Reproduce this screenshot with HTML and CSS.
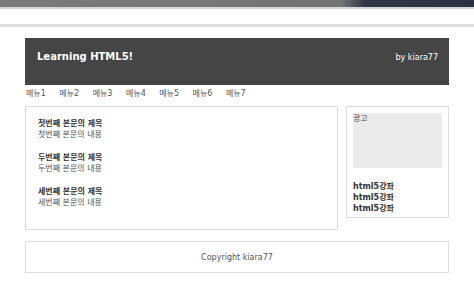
FILE: index.html
```html
<!DOCTYPE html>
<html lang="ko">
<head>
    <meta charset="UTF-8">
    <meta name="viewport" content="width=device-width, initial-scale=1.0">
    <title>Learning HTML5!</title>
    <link rel="stylesheet" href="styles.css">
</head>
<body>
    <div class="chrome"></div>
    <div class="chrome-line"></div>
    <div class="chrome-bar"></div>

    <div class="wrapper">
        <header class="header">
            <h1 class="logo">Learning HTML5!</h1>
            <span class="author">by kiara77</span>
        </header>

        <nav class="menu">
            <a href="#">메뉴1</a>
            <a href="#">메뉴2</a>
            <a href="#">메뉴3</a>
            <a href="#">메뉴4</a>
            <a href="#">메뉴5</a>
            <a href="#">메뉴6</a>
            <a href="#">메뉴7</a>
        </nav>

        <div class="columns">
            <section class="content">
                <article class="post">
                    <h2 class="post-title">첫번째 본문의 제목</h2>
                    <p class="post-body">첫번째 본문의 내용</p>
                </article>
                <article class="post">
                    <h2 class="post-title">두번째 본문의 제목</h2>
                    <p class="post-body">두번째 본문의 내용</p>
                </article>
                <article class="post">
                    <h2 class="post-title">세번째 본문의 제목</h2>
                    <p class="post-body">세번째 본문의 내용</p>
                </article>
            </section>

            <aside class="sidebar">
                <div class="ad">광고</div>
                <ul class="links">
                    <li>html5강좌</li>
                    <li>html5강좌</li>
                    <li>html5강좌</li>
                </ul>
            </aside>
        </div>

        <footer class="footer">Copyright kiara77</footer>
    </div>
</body>
</html>
```

FILE: styles.css
```css
body {
    margin: 0;
    font-family: "DejaVu Sans", "Noto Sans CJK KR", sans-serif;
    font-size: 8px;
    color: #555;
    background-color: #fff;
}

.chrome {
    height: 7px;
    background: linear-gradient(to right, #7a7a7a 0, #747474 72%, #30364a 77%, #2c3246 100%);
}

.chrome-line {
    height: 2px;
    background-color: #d6d6d6;
    margin-bottom: 15px;
}

.chrome-bar {
    height: 3px;
    background-color: #dedede;
}

.wrapper {
    width: 424px;
    margin: 11px 0 0 25px;
}

.header {
    height: 47px;
    box-sizing: border-box;
    padding: 13px 11px 0 12px;
    background-color: #454545;
    color: #fff;
    display: flex;
    justify-content: space-between;
    align-items: baseline;
}

.logo {
    margin: 0;
    font-size: 10px;
    line-height: 12px;
    font-weight: bold;
}

.author {
    font-size: 8px;
}

.menu {
    height: 21px;
    box-sizing: border-box;
    padding: 3px 1px 0;
    display: flex;
    gap: 13.5px;
    line-height: 11px;
}

.menu a {
    color: #555;
    text-decoration: none;
}

.columns {
    display: flex;
    align-items: flex-start;
    gap: 8px;
}

.content {
    flex: 0 0 313px;
    box-sizing: border-box;
    height: 124px;
    border: 1px solid #ddd;
    padding: 11px 12px;
}

.post {
    margin-bottom: 12px;
}

.post-title {
    margin: 0;
    font-size: 8px;
    line-height: 11px;
    font-weight: bold;
    color: #333;
}

.post-body {
    margin: 0;
    line-height: 11px;
}

.sidebar {
    flex: 1;
    box-sizing: border-box;
    height: 112px;
    border: 1px solid #ddd;
    padding: 6px;
}

.ad {
    height: 55px;
    box-sizing: border-box;
    padding-top: 1px;
    background-color: #eaeaea;
    line-height: 10px;
}

.links {
    list-style: none;
    margin: 13px 0 0;
    padding: 0;
    line-height: 11px;
    font-weight: bold;
    color: #333;
}

.footer {
    margin-top: 11px;
    height: 32px;
    box-sizing: border-box;
    border: 1px solid #ddd;
    display: flex;
    justify-content: center;
    align-items: center;
}
```
